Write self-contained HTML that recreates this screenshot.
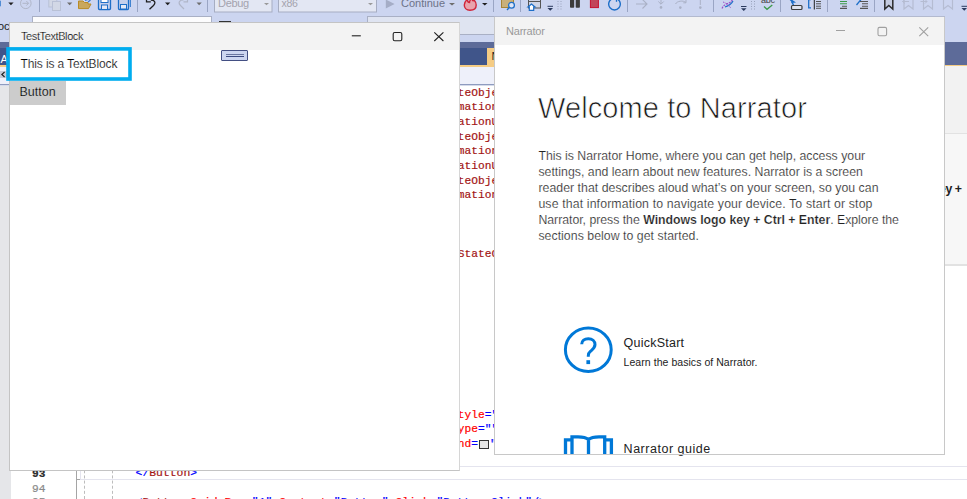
<!DOCTYPE html>
<html><head><meta charset="utf-8">
<style>
*{margin:0;padding:0;box-sizing:border-box}
html,body{width:967px;height:499px;overflow:hidden;background:#fff;position:relative;font-family:"Liberation Sans",sans-serif}
.a{position:absolute}
.t{position:absolute;white-space:nowrap;line-height:1}
.mono{font-family:"Liberation Mono",monospace}
.cl{position:absolute;white-space:nowrap;line-height:1;font-family:"Liberation Mono",monospace;font-size:11.2px;-webkit-text-stroke:0.2px}
</style></head><body>
<!-- IDE background -->
<div class="a" style="left:0;top:0;width:967px;height:17px;background:#ccd5f0"></div>
<div class="a" style="left:0;top:17px;width:967px;height:25px;background:#ccd5f0"></div>
<!-- toolbar icons -->
<svg class="a" style="left:0;top:0" width="967" height="16" viewBox="0 0 967 16">
 <g fill="none" stroke-width="1">
  <rect x="-3" y="0.7" width="3.7" height="5.6" fill="#1e6fc8" stroke="none"/>
  <path d="M8.3 2.6 H13.6 L10.95 5.3 Z" fill="#1e1e1e" stroke="none"/>
  <circle cx="25.8" cy="3.3" r="5.3" stroke="#b0b6c8"/>
  <path d="M22.5 3.3 H28.5 M26.3 1 L28.6 3.3 L26.3 5.6" stroke="#b0b6c8"/>
  <path d="M39.5 0 V12" stroke="#9aa5c4"/>
  <rect x="48.8" y="-2" width="8" height="9" fill="#d2d8e6" stroke="#b9c1d6"/>
  <rect x="52.5" y="1.5" width="8" height="9" fill="#d2d8e6" stroke="#b9c1d6"/>
  <path d="M67 2.6 H72.3 L69.65 5.3 Z" fill="#6e6e6e" stroke="none"/>
  <path d="M78.5 1 H83 L84.5 2.5 H88 V4 H91 L88.5 8.6 H78.5 Z" fill="#c9a75c" stroke="#b88a25"/>
  <path d="M85 0.5 L89 -1 M88 2 L90.5 0" stroke="#3a7bd5" stroke-width="1.3"/>
  <rect x="98.5" y="-1.5" width="12" height="11" rx="1" fill="#c5d0ec" stroke="#1e6fc8" stroke-width="1.3"/>
  <rect x="101" y="-1" width="7" height="3.5" fill="#fff" stroke="#1e6fc8"/>
  <rect x="101.5" y="5" width="6" height="4.5" fill="#e4e9f6" stroke="#1e6fc8"/>
  <rect x="118.5" y="-1.5" width="10" height="11" rx="1" fill="#c5d0ec" stroke="#1e6fc8" stroke-width="1.3"/>
  <rect x="120.5" y="4.5" width="6" height="4.5" fill="#e4e9f6" stroke="#1e6fc8"/>
  <path d="M130.3 -1 V7" stroke="#1e6fc8"/>
  <path d="M137.5 0 V12" stroke="#9aa5c4"/>
  <path d="M146.5 -0.5 V1.8 H150.8 M150.8 0 C155 0 156 3 153.5 5.5 L149.5 9.3" stroke="#1e1e1e" stroke-width="1.3"/>
  <path d="M165 2.6 H170.3 L167.65 5.3 Z" fill="#1e1e1e" stroke="none"/>
  <path d="M187.5 -0.5 V1.8 H183.5 M183.5 0 C179 0 178 3 180.5 5.5 L184 9" stroke="#b0b6c8" stroke-width="1.2"/>
  <path d="M196.5 2.6 H201.8 L199.15 5.3 Z" fill="#6e6e6e" stroke="none"/>
  <path d="M207.5 0 V12" stroke="#9aa5c4"/>
  <rect x="214.5" y="-3" width="57.5" height="15" fill="#e3e7f3" stroke="#a6adc2"/>
  <path d="M264 3 H269 L266.5 5.3 Z" fill="#9a9a9a" stroke="none"/>
  <rect x="278.5" y="-3" width="98" height="15" fill="#e3e7f3" stroke="#a6adc2"/>
  <path d="M368 3 H373 L370.5 5.3 Z" fill="#9a9a9a" stroke="none"/>
  <path d="M385.8 -0.5 L394.6 4 L385.8 8.5 Z" fill="#a5adc6" stroke="none"/>
  <path d="M449 3 H455 L452 5.5 Z" fill="#6e6e6e" stroke="none"/>
  <path d="M470 10.2 C466 10.2 464.3 7.5 464.3 5 C464.3 2.5 466 0.5 467.5 -0.5 C467.5 1.5 468.5 2.5 469.5 2.5 C469.5 0.5 471 -1 472.5 -1 C472 0.5 473.5 1.5 474 0 C475.5 1.5 476.2 3.5 476.2 5 C476.2 8 474 10.2 470 10.2 Z" fill="#e9a3ad" stroke="#d0253a" stroke-width="1.4"/>
  <path d="M482 3 H487.5 L484.75 5.5 Z" fill="#1e1e1e" stroke="none"/>
  <path d="M493.5 0 V12" stroke="#9aa5c4"/>
  <rect x="501.5" y="-1" width="12" height="8.5" fill="#c9b07a" stroke="#a88536"/>
  <circle cx="511.5" cy="5.2" r="2.9" fill="#dfe6f6" stroke="#1e6fc8" stroke-width="1.3"/>
  <path d="M509.5 7.3 L507 10" stroke="#1e6fc8" stroke-width="1.4"/>
  <path d="M520.5 0 V12" stroke="#9aa5c4"/>
  <rect x="528.5" y="-1" width="12" height="9" fill="#cfd5e6" stroke="#555"/>
  <path d="M528.5 1.5 H540.5" stroke="#555"/>
  <path d="M531.5 4 L528 7 H529.3 V10.3 H533.7 V7 H535 Z" fill="#fff" stroke="#1e6fc8" stroke-width="1.2"/>
  <path d="M547.5 6.3 H553" stroke="#2b3a5e" stroke-width="1"/>
  <path d="M547.5 8 H553 L550.25 10.7 Z" fill="#2b3a5e" stroke="none"/>
  <path d="M558 1 V11 M561 1 V11" stroke="#9aa3bc" stroke-dasharray="1 1.5"/>
  <rect x="570" y="-1" width="4.2" height="8.8" rx="0.8" fill="#3c3c3c" stroke="none"/>
  <rect x="575.7" y="-1" width="4.2" height="8.8" rx="0.8" fill="#3c3c3c" stroke="none"/>
  <rect x="590.4" y="-1" width="8" height="8.6" fill="#c1455a" stroke="#c8102e" stroke-width="1"/>
  <path d="M611.8 -1 A5.8 5.8 0 1 0 617.2 -1" stroke="#1e6fc8" stroke-width="1.4"/>
  <path d="M616.5 -1 V1.8" stroke="#1e6fc8" stroke-width="1.3"/>
  <path d="M627.5 0 V12" stroke="#9aa5c4"/>
  <path d="M636 4 H646.5 M642.5 -0.5 L647 4 L642.5 8.5" stroke="#aab1c6" stroke-width="1.1"/>
  <path d="M661 -1 V4 M658.3 1.5 L661 4.2 L663.7 1.5" stroke="#aab1c6" stroke-width="1"/>
  <circle cx="661" cy="7.4" r="1.3" fill="#aab1c6" stroke="none"/>
  <path d="M675.5 4 C677 1 683 0 686 2.5 M686 0 V2.8 H683.3" stroke="#aab1c6" stroke-width="1"/>
  <circle cx="680.3" cy="7.6" r="1.3" fill="#aab1c6" stroke="none"/>
  <path d="M700.3 -1 V5" stroke="#aab1c6" stroke-width="1"/>
  <circle cx="700.3" cy="7.6" r="1.3" fill="#aab1c6" stroke="none"/>
  <path d="M713.5 0 V12" stroke="#9aa5c4"/>
  <path d="M722 8.5 C724 4 727 4 729 3 C731 2 732 1 732.5 -1" stroke="#9b4fc8" stroke-width="1.2" stroke-dasharray="2 1"/>
  <path d="M725 7 C728 6 731 5 733 1" stroke="#1e6fc8" stroke-width="1.2"/>
  <path d="M723 2 C726 3 729 5 731 8.5" stroke="#9b4fc8" stroke-width="1" stroke-dasharray="1.5 1.2"/>
  <path d="M741 6.5 H746.5" stroke="#2b3a5e"/>
  <path d="M741 8.2 H746.5 L743.75 11 Z" fill="#2b3a5e" stroke="none"/>
  <path d="M751.5 1 V11 M754.5 1 V11" stroke="#9aa3bc" stroke-dasharray="1 1.5"/>
  <path d="M764 6.6 L767 9.3 L772.3 5" stroke="#3c9a4a" stroke-width="1.3"/>
  <path d="M780.5 0 V12" stroke="#9aa5c4"/>
  <path d="M789.5 -1 L794 2 L792 2.3 L793.5 5" stroke="#1e6fc8" stroke-width="1.5" fill="#1e6fc8"/>
  <rect x="791.5" y="5.5" width="10.5" height="4" rx="1" fill="#dfe3ee" stroke="#3c3c3c" stroke-width="1.2"/>
  <path d="M811 -0.5 H808.7 V7.8 H811" stroke="#1e6fc8" stroke-width="1.3"/>
  <path d="M814.3 -1 V9.5" stroke="#1e1e1e"/>
  <path d="M816 1.5 H821 M816 3.8 H821 M816 6.2 H821 M816 8.3 H821" stroke="#555"/>
  <path d="M827.5 0 V12" stroke="#9aa5c4"/>
  <path d="M840 1.5 H847 M840 3.8 H847" stroke="#3c9a4a" stroke-width="1.1"/>
  <path d="M842 6.2 H847 M840 8.4 H847" stroke="#555" stroke-width="1.1"/>
  <path d="M856.5 5 L861 -0.5" stroke="#1e6fc8" stroke-width="1.3"/>
  <path d="M860 1.5 H868 M862 3.8 H868 M862 6.2 H868 M860 8.4 H868" stroke="#555" stroke-width="1.1"/>
  <path d="M874.5 0 V12" stroke="#9aa5c4"/>
  <path d="M884.8 -1 V9 L888.8 5.5 L892.8 9 V-1" fill="#c4cbe0" stroke="#2b2b2b" stroke-width="1.5"/>
  <path d="M904 -1 V9 L908.5 5.5 L913 9 V-1" stroke="#b5bcd2" stroke-width="1.2"/>
  <path d="M902.5 1.5 L905 -0.5 M902.5 1.5 L905 3.5 M902.5 1.5 H909" stroke="#b5bcd2"/>
  <path d="M923.5 -1 V9 L928 5.5 L932.5 9 V-1" stroke="#b5bcd2" stroke-width="1.2"/>
  <path d="M920.5 1.5 H927 M925 -0.5 L927 1.5 L925 3.5" stroke="#b5bcd2"/>
  <path d="M943.5 -1 V9 L948 5.5 L952.5 9 V-1" stroke="#b5bcd2" stroke-width="1.2"/>
  <path d="M961.5 6.3 H967" stroke="#2b3a5e"/>
  <path d="M961.5 8 H967 L964.25 10.8 Z" fill="#2b3a5e" stroke="none"/>
 </g>
</svg>
<div class="t" style="left:218px;top:-1.9px;font-size:11px;letter-spacing:-0.3px;color:#a3a3ae">Debug</div>
<div class="t" style="left:281.5px;top:-1.6px;font-size:10.5px;letter-spacing:-0.3px;color:#a3a3ae">x86</div>
<div class="t" style="left:401px;top:-2.5px;font-size:11px;color:#6d7388">Continue</div>
<div class="t" style="left:761px;top:-4.3px;font-size:9px;letter-spacing:-0.2px;color:#444">abc</div>
<!-- row2 boxes -->
<div class="a" style="left:32px;top:16px;width:180px;height:18px;background:#fcfcfd;border:1px solid #a9b0c5;border-bottom:none"></div>
<div class="a" style="left:367px;top:16px;width:130px;height:19px;background:#dfe4f1;border:1px solid #a9b0c5"></div>
<div class="a" style="left:219px;top:20.5px;width:12px;height:1.5px;background:#333"></div>
<div class="a" style="left:33px;top:17px;width:178px;height:5px;overflow:hidden"><div class="t" style="left:3px;top:4.2px;font-size:12px;color:#1e1e1e">WPF TestTextBlock</div></div>
<div class="a" style="left:238px;top:17px;width:128px;height:5px;overflow:hidden"><div class="t" style="left:0;top:4.4px;font-size:12px;color:#555">Hot Reload on File Save</div></div>
<div class="t" style="left:-2.3px;top:21.2px;font-size:11.5px;color:#1e1e1e">oc</div>
<div class="a" style="left:944px;top:17px;width:23px;height:25px;background:#ccd5f0"></div>
<!-- tabs band -->
<div class="a" style="left:0;top:42px;width:967px;height:23px;background:#5d6b99"></div>
<div class="a" style="left:0;top:48px;width:10px;height:17px;background:#40558a"></div>
<div class="t" style="left:0.5px;top:53.5px;font-size:11px;color:#fff">A</div>
<div class="a" style="left:460px;top:48px;width:27px;height:17px;background:#40558a"></div>
<div class="a" style="left:487px;top:48px;width:9px;height:17px;background:#f5cc84"></div>
<div class="t" style="left:491.5px;top:51.3px;font-size:11px;color:#1e1e1e">N</div>
<div class="a" style="left:0;top:65px;width:967px;height:2px;background:#f5cc84"></div>
<div class="a" style="left:0;top:67px;width:967px;height:17px;background:#eef0fa"></div>
<div class="a" style="left:0;top:71px;width:7px;height:7px;background:#c6cad6"></div>
<svg class="a" style="left:0;top:71px" width="7" height="7"><path d="M4.6 1 L1.8 3.5 L4.6 6" stroke="#222" stroke-width="1.1" fill="none"/></svg>
<div class="a" style="left:0;top:84px;width:967px;height:1px;background:#8e9bbf"></div>
<div class="a" style="left:0;top:85px;width:967px;height:1px;background:#d5dbea"></div>
<!-- right strip panel -->
<div class="a" style="left:944px;top:66px;width:23px;height:67px;background:#f2f2f2"></div>
<div class="a" style="left:944px;top:133px;width:23px;height:1px;background:#e2e2e2"></div>
<div class="a" style="left:944px;top:134px;width:23px;height:131px;background:#f7f7f7"></div>
<div class="a" style="left:944px;top:264px;width:23px;height:2px;background:#e2e2e2"></div>
<div class="t" style="left:932.5px;top:183px;font-size:12.3px;font-weight:bold;letter-spacing:-0.4px;color:#222">key +</div>
<!-- editor left margin -->
<div class="a" style="left:0;top:86px;width:11px;height:413px;background:#e5e6e9"></div>
<!-- editor bottom -->
<div class="a" style="left:76px;top:460px;width:1px;height:39px;background:#a5a5a5"></div>
<div class="a" style="left:76px;top:479px;width:4px;height:1px;background:#a5a5a5"></div>
<div class="a" style="left:80px;top:466px;width:887px;height:14px;border:1px solid #e4e4ee;border-right:none"></div>
<div class="a" style="left:84px;top:460px;width:0;height:39px;border-left:1px dashed #bdbdbd"></div>
<div class="a" style="left:112px;top:460px;width:0;height:39px;border-left:1px dashed #bdbdbd"></div>
<div class="cl" style="left:32px;top:469.4px;font-weight:bold;color:#2b2b2b">93</div>
<div class="cl" style="left:32px;top:483.6px;color:#8a8a8a">94</div>
<div class="cl" style="left:32px;top:496.6px;color:#8a8a8a">95</div>
<div class="cl" style="left:135.6px;top:468.2px;font-size:11.4px"><span style="color:#0000ff">&lt;/</span><span style="color:#a31515">Button</span><span style="color:#0000ff">&gt;</span></div>
<div class="cl" style="left:135.6px;top:496.6px;font-size:11.4px"><span style="color:#0000ff">&lt;</span><span style="color:#a31515">Button</span> <span style="color:#ff0000">Grid.Row</span><span style="color:#0000ff">="1"</span> <span style="color:#ff0000">Content</span><span style="color:#0000ff">="Button"</span> <span style="color:#ff0000">Click</span><span style="color:#0000ff">="Button_Click"/&gt;</span></div>

<!-- CODE -->
<div class="a" style="left:459px;top:86px;width:35px;height:380px;overflow:hidden">
  <div class="cl" style="left:-1.2px;top:1.80px;color:#a31515">teObject</div>
  <div class="cl" style="left:-1.2px;top:16.43px;color:#a31515">mationU</div>
  <div class="cl" style="left:-1.2px;top:31.06px;color:#a31515">ationUp</div>
  <div class="cl" style="left:-1.2px;top:45.69px;color:#a31515">teObject</div>
  <div class="cl" style="left:-1.2px;top:60.32px;color:#a31515">mationU</div>
  <div class="cl" style="left:-1.2px;top:74.95px;color:#a31515">ationUp</div>
  <div class="cl" style="left:-1.2px;top:89.58px;color:#a31515">teObject</div>
  <div class="cl" style="left:-1.2px;top:104.21px;color:#a31515">mationU</div>
  <div class="cl" style="left:-1.2px;top:162.73px;color:#a31515">StateCh</div>
  <div class="cl" style="left:-1.2px;top:323.66px"><span style="color:#ff0000">tyle</span><span style="color:#0000ff">="</span></div>
  <div class="cl" style="left:-1.2px;top:338.29px"><span style="color:#ff0000">ype</span><span style="color:#0000ff">=""</span></div>
  <div class="cl" style="left:-1.2px;top:352.92px"><span style="color:#ff0000">nd</span><span style="color:#0000ff">=</span></div>
  <div class="a" style="left:20px;top:354px;width:9.5px;height:9px;border:1.3px solid #333;background:#e6e6e6"></div>
  <div class="cl" style="left:30.9px;top:352.92px;color:#0000ff">"</div>
</div>
<!-- Left window -->
<div class="a" style="left:9px;top:22px;width:451px;height:449px;background:#fff;border:1px solid #c4c4c4;border-right-color:#d6d6d6"></div>
<div class="a" style="left:10px;top:23px;width:449px;height:27px;background:#f3f3f3"></div>
<div class="t" style="left:21px;top:30.6px;font-size:11px;letter-spacing:-0.4px;color:#000;-webkit-text-stroke:0.2px #f3f3f3">TestTextBlock</div>
<svg class="a" style="left:350px;top:30px" width="14" height="10"><path d="M1.8 5.8 H10.8" stroke="#222" stroke-width="1.1"/></svg>
<svg class="a" style="left:390px;top:29px" width="16" height="16"><rect x="3.2" y="3.5" width="8.6" height="8.2" rx="1.5" stroke="#222" stroke-width="1.1" fill="none"/></svg>
<svg class="a" style="left:433px;top:31px" width="12" height="11" viewBox="0 0 12 11"><path d="M1.3 1.3 L10.4 10 M10.4 1.3 L1.3 10" stroke="#222" stroke-width="1.1" fill="none"/></svg>
<div class="t" style="left:20.5px;top:57.8px;font-size:12px;letter-spacing:-0.12px;color:#000;-webkit-text-stroke:0.2px #fff">This is a TextBlock</div>
<div class="a" style="left:10px;top:81px;width:56px;height:24px;background:#cccccc"></div>
<div class="t" style="left:19.5px;top:85.6px;font-size:12.5px;color:#000;-webkit-text-stroke:0.2px #ccc">Button</div>
<!-- = adorner -->
<div class="a" style="left:221px;top:50px;width:27px;height:11px;background:#ccd5f0;border:1px solid #434f83;border-radius:1px"></div>
<div class="a" style="left:226px;top:54px;width:18px;height:1px;background:#6a76a0"></div>
<div class="a" style="left:226px;top:56px;width:18px;height:1px;background:#3c4a80"></div>
<!-- cyan narrator focus -->
<svg class="a" style="left:0;top:40px" width="140" height="45"><rect x="8" y="8.9" width="122" height="30.1" stroke="#00adef" stroke-width="3.6" fill="none"/></svg>

<!-- Narrator window -->
<div class="a" style="left:494px;top:17px;width:451px;height:438px;background:#fff;border:1px solid #c8c8c8;border-top:none"></div>
<div class="a" style="left:495px;top:17px;width:449px;height:28px;background:#f3f3f3"></div>
<div class="a" style="left:494px;top:16px;width:451px;height:1px;background:#b3bacf"></div>
<div class="t" style="left:506px;top:25.5px;font-size:11px;letter-spacing:-0.2px;color:#9a9a9a">Narrator</div>
<div class="a" style="left:836px;top:30px;width:9px;height:1px;background:#a0a0a0"></div>
<svg class="a" style="left:875px;top:24px" width="16" height="16"><rect x="3" y="3.4" width="8.6" height="8.4" rx="1.5" stroke="#a0a0a0" stroke-width="1.1" fill="none"/></svg>
<svg class="a" style="left:918px;top:26px" width="12" height="12" viewBox="0 0 12 12"><path d="M1.3 1.3 L10.2 10.2 M10.2 1.3 L1.3 10.2" stroke="#a0a0a0" stroke-width="1.1" fill="none"/></svg>

<div class="t" style="left:538px;top:94px;font-size:29px;letter-spacing:0.1px;color:#1a1a1a;-webkit-text-stroke:0.7px #fff">Welcome to Narrator</div>
<div class="t" style="left:538.4px;top:150.4px;font-size:12.3px;color:#222;-webkit-text-stroke:0.2px #fff">This is Narrator Home, where you can get help, access your</div>
<div class="t" style="left:538.4px;top:166.4px;font-size:12.3px;-webkit-text-stroke:0.2px #fff;letter-spacing:0.02px;color:#222">settings, and learn about new features. Narrator is a screen</div>
<div class="t" style="left:538.4px;top:182.4px;font-size:12.3px;-webkit-text-stroke:0.2px #fff;letter-spacing:0.033px;color:#222">reader that describes aloud what’s on your screen, so you can</div>
<div class="t" style="left:538.4px;top:198.4px;font-size:12.3px;-webkit-text-stroke:0.2px #fff;letter-spacing:0.135px;color:#222">use that information to navigate your device. To start or stop</div>
<div class="t" style="left:538.4px;top:214.4px;font-size:12.3px;-webkit-text-stroke:0.2px #fff;letter-spacing:-0.025px;color:#222">Narrator, press the <b>Windows logo key + Ctrl + Enter</b>. Explore the</div>
<div class="t" style="left:538.4px;top:230.4px;font-size:12.3px;-webkit-text-stroke:0.2px #fff;letter-spacing:0.04px;color:#222">sections below to get started.</div>

<svg class="a" style="left:560px;top:322px" width="56" height="56" viewBox="0 0 56 56">
  <ellipse cx="28.3" cy="27.75" rx="22.9" ry="21.75" stroke="#0078d7" stroke-width="3" fill="none"/>
  <path d="M21.7 22.3 C21.7 18.7 24.5 16.7 28.3 16.7 C32.3 16.7 35 19.2 35 22.6 C35 26 32.6 27.6 30.6 29.2 C29 30.5 28.3 31.6 28.3 33.8 L28.3 34.8" stroke="#0078d7" stroke-width="3" fill="none"/>
  <rect x="26.4" y="38.2" width="3.7" height="3.9" fill="#0078d7"/>
</svg>
<div class="t" style="left:623.6px;top:337.3px;font-size:12.5px;letter-spacing:0.23px;color:#222">QuickStart</div>
<div class="t" style="left:623.6px;top:357px;font-size:10.5px;letter-spacing:0.05px;color:#222">Learn the basics of Narrator.</div>

<svg class="a" style="left:560px;top:430px" width="60" height="25" viewBox="0 0 60 25">
  <path d="M5.5 24 V9.9 H11.7 M12 24 V6.8 H18 C22.5 6.8 26 7.5 28.5 9.5 C31 7.5 34.5 6.8 39 6.8 H44.7 V24 M28.5 9.5 V24 M44.7 9.9 H51.4 V24" stroke="#0078d7" stroke-width="3.3" fill="none"/>
</svg>
<div class="t" style="left:623.6px;top:443px;font-size:12.5px;letter-spacing:0.52px;color:#222">Narrator guide</div>
<div class="a" style="left:494px;top:454px;width:451px;height:1px;background:#c8c8c8"></div>
</body></html>
